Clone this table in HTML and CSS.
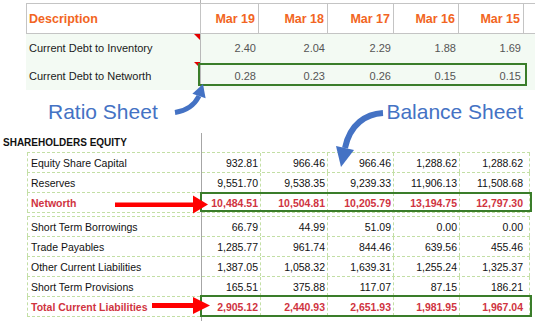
FILE: index.html
```html
<!DOCTYPE html>
<html>
<head>
<meta charset="utf-8">
<link rel="stylesheet" href="styles.css">
</head>
<body>
<section class="ratio">
  <div class="rhead">
    <div class="hcell desc">Description</div>
    <div class="hcell num">Mar 19</div>
    <div class="hcell num">Mar 18</div>
    <div class="hcell num">Mar 17</div>
    <div class="hcell num">Mar 16</div>
    <div class="hcell num">Mar 15</div>
    <div class="hcell filler"></div>
  </div>
  <div class="rrow">
    <div class="rcell desc note">Current Debt to Inventory</div>
    <div class="rcell num">2.40</div>
    <div class="rcell num">2.04</div>
    <div class="rcell num">2.29</div>
    <div class="rcell num">1.88</div>
    <div class="rcell num">1.69</div>
    <div class="rcell"></div>
  </div>
  <div class="rrow boxed">
    <div class="rcell desc note">Current Debt to Networth</div>
    <div class="rcell num">0.28</div>
    <div class="rcell num">0.23</div>
    <div class="rcell num">0.26</div>
    <div class="rcell num">0.15</div>
    <div class="rcell num">0.15</div>
    <div class="rcell"></div>
  </div>
</section>
<div class="labels">
  <span class="label l1">Ratio Sheet</span>
  <span class="label l2">Balance Sheet</span>
</div>
<section class="balance">
  <div class="shead">SHAREHOLDERS EQUITY</div>
  <div class="btable">
    <div class="brow first">
      <div class="bdesc">Equity Share Capital</div>
      <div class="bnum">932.81</div><div class="bnum">966.46</div><div class="bnum">966.46</div><div class="bnum">1,288.62</div><div class="bnum">1,288.62</div>
    </div>
    <div class="brow">
      <div class="bdesc">Reserves</div>
      <div class="bnum">9,551.70</div><div class="bnum">9,538.35</div><div class="bnum">9,239.33</div><div class="bnum">11,906.13</div><div class="bnum">11,508.68</div>
    </div>
    <div class="brow red boxed nw">
      <div class="bdesc">Networth</div>
      <div class="bnum">10,484.51</div><div class="bnum">10,504.81</div><div class="bnum">10,205.79</div><div class="bnum">13,194.75</div><div class="bnum">12,797.30</div>
    </div>
    <div class="spacer"></div>
    <div class="brow first">
      <div class="bdesc">Short Term Borrowings</div>
      <div class="bnum">66.79</div><div class="bnum">44.99</div><div class="bnum">51.09</div><div class="bnum">0.00</div><div class="bnum">0.00</div>
    </div>
    <div class="brow">
      <div class="bdesc">Trade Payables</div>
      <div class="bnum">1,285.77</div><div class="bnum">961.74</div><div class="bnum">844.46</div><div class="bnum">639.56</div><div class="bnum">455.46</div>
    </div>
    <div class="brow">
      <div class="bdesc">Other Current Liabilities</div>
      <div class="bnum">1,387.05</div><div class="bnum">1,058.32</div><div class="bnum">1,639.31</div><div class="bnum">1,255.24</div><div class="bnum">1,325.37</div>
    </div>
    <div class="brow">
      <div class="bdesc">Short Term Provisions</div>
      <div class="bnum">165.51</div><div class="bnum">375.88</div><div class="bnum">117.07</div><div class="bnum">87.15</div><div class="bnum">186.21</div>
    </div>
    <div class="brow red boxed tot">
      <div class="bdesc">Total Current Liabilities</div>
      <div class="bnum">2,905.12</div><div class="bnum">2,440.93</div><div class="bnum">2,651.93</div><div class="bnum">1,981.95</div><div class="bnum">1,967.04</div>
    </div>
  </div>
</section>
<svg class="arrows" width="535" height="321" viewBox="0 0 535 321">
  <path d="M175,112.5 Q192,110 199,96" fill="none" stroke="#4472c4" stroke-width="5"/>
  <polygon points="203,84 192.4,93.8 205.6,98.2" fill="#4472c4"/>
  <path d="M383,113 C366,114 350,124 345,148" fill="none" stroke="#4472c4" stroke-width="6"/>
  <polygon points="341,167 336,146 354,150" fill="#4472c4"/>
  <rect x="115" y="202.5" width="80" height="4.5" fill="#ff0000"/>
  <polygon points="193,195.5 208,204.5 193,213.5" fill="#ff0000"/>
  <rect x="152" y="303" width="42" height="5" fill="#ff0000"/>
  <polygon points="193,297 210,305.5 193,314" fill="#ff0000"/>
</svg>
</body>
</html>
```
FILE: styles.css
```css
body {
  margin: 0;
  width: 535px;
  height: 321px;
  overflow: hidden;
  position: relative;
  background: #fff;
  font-family: "Liberation Sans", Arial, sans-serif;
  color: #111;
}

.ratio {
  margin-left: 26px;
  padding-top: 3px;
  background: linear-gradient(90deg, transparent 174px, #b3b3b3 174px, #b3b3b3 175px, transparent 175px) top left / 100% 3px no-repeat;
}

.rhead,
.rrow {
  display: grid;
  grid-template-columns: 175px 58px 69px 66px 65px 65px 1fr;
}

.rhead {
  height: 31px;
  border-top: 1px solid #c4c4c4;
  box-sizing: border-box;
}

.hcell {
  box-sizing: border-box;
  border-right: 1px solid #c4c4c4;
  border-bottom: 1px solid #c4c4c4;
  display: flex;
  align-items: center;
  font-weight: bold;
  font-size: 12.5px;
  color: #f26522;
}

.hcell.desc {
  border-left: 1px solid #c4c4c4;
  padding-left: 2px;
}

.hcell.num {
  justify-content: flex-end;
  padding-right: 3px;
}

.hcell.filler {
  border-right: 0;
}

.rrow {
  height: 28px;
  background: #f3faf3;
  position: relative;
  font-size: 11px;
}

.rcell {
  box-sizing: border-box;
  display: flex;
  align-items: center;
}

.rcell.desc {
  padding-left: 3px;
  border-right: 1px solid #b9b9b9;
  position: relative;
  color: #1a1a1a;
}

.rcell.num {
  justify-content: flex-end;
  padding-right: 3px;
  color: #555;
}

.note::after {
  content: "";
  position: absolute;
  top: 0;
  right: 0;
  width: 0;
  height: 0;
  border-top: 6px solid #e40000;
  border-left: 6px solid transparent;
}

.rrow.boxed::after {
  content: "";
  position: absolute;
  left: 172px;
  top: 1px;
  width: 329px;
  height: 23px;
  border: 2px solid #3a7d2a;
  box-sizing: border-box;
}

.labels {
  height: 43px;
  box-sizing: border-box;
  padding-top: 10px;
  display: flex;
  font-size: 21px;
  line-height: 24px;
  color: #4472c4;
}

.l1 {
  margin-left: 48px;
}

.l2 {
  margin-left: auto;
  margin-right: 12px;
}

.balance {
  height: 188px;
  background: linear-gradient(90deg, transparent 201px, #a6a6a6 201px, #a6a6a6 202px, transparent 202px);
}

.shead {
  height: 19px;
  line-height: 19px;
  padding-left: 3px;
  font-size: 10px;
  font-weight: bold;
  color: #111;
}

.btable {
  margin-left: 27px;
  width: 503px;
}

.brow {
  display: grid;
  grid-template-columns: 175px 59px 67px 66px 66px 70px;
  height: 20px;
  box-sizing: border-box;
  border-bottom: 1px dashed #c3dfa5;
  font-size: 10.5px;
  position: relative;
}

.brow.first {
  border-top: 1px dashed #c3dfa5;
  height: 21px;
}

.bdesc {
  box-sizing: border-box;
  border-left: 1px dashed #c3dfa5;
  padding-left: 3px;
  display: flex;
  align-items: center;
}

.bnum {
  box-sizing: border-box;
  border-right: 1px dashed #c3dfa5;
  display: flex;
  justify-content: flex-end;
  align-items: center;
  padding-right: 2px;
}

.bnum:last-child {
  padding-right: 6px;
}

.spacer {
  height: 3px;
}

.red {
  color: #d0343f;
  font-weight: bold;
}

.brow.boxed::after {
  content: "";
  position: absolute;
  left: 173px;
  right: -2px;
  border: 2px solid #3a7d2a;
}

.brow.nw::after {
  top: -1px;
  bottom: 0;
}

.brow.tot::after {
  top: -2px;
  bottom: -1px;
}

.arrows {
  position: absolute;
  top: 0;
  left: 0;
  pointer-events: none;
}
```
